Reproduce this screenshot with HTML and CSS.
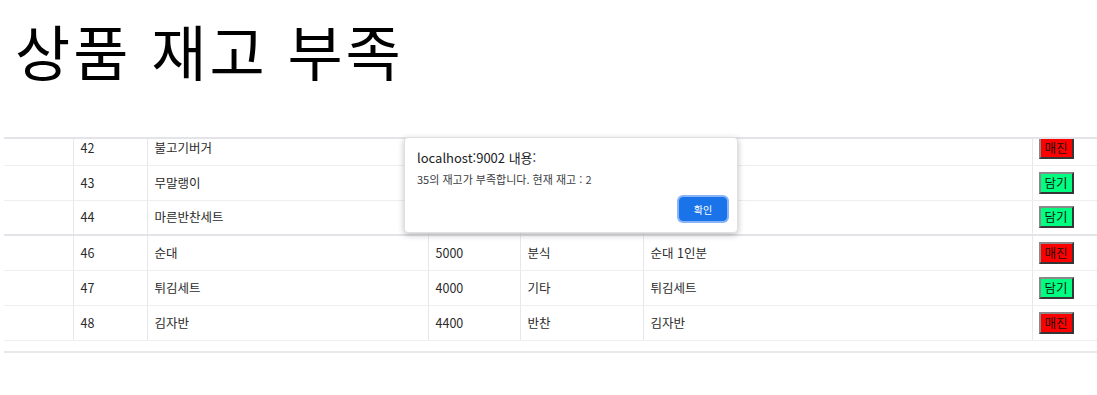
FILE: index.html
```html
<!DOCTYPE html>
<html lang="ko">
<head>
<meta charset="utf-8">
<title>상품 재고 부족</title>
<link rel="stylesheet" href="styles.css">
</head>
<body>
<h1 class="title">상품 재고 부족</h1>
<div class="table-wrap">
  <table class="stock">
    <colgroup>
      <col class="c1"><col class="c2"><col class="c3"><col class="c4"><col class="c5"><col class="c6"><col class="c7">
    </colgroup>
    <tbody>
      <tr><td></td><td>42</td><td>불고기버거</td><td></td><td></td><td></td><td><button class="btn sold">매진</button></td></tr>
      <tr><td></td><td>43</td><td>무말랭이</td><td></td><td></td><td></td><td><button class="btn add">담기</button></td></tr>
      <tr class="thick"><td></td><td>44</td><td>마른반찬세트</td><td></td><td></td><td></td><td><button class="btn add">담기</button></td></tr>
      <tr><td></td><td>46</td><td>순대</td><td>5000</td><td>분식</td><td>순대 1인분</td><td><button class="btn sold">매진</button></td></tr>
      <tr><td></td><td>47</td><td>튀김세트</td><td>4000</td><td>기타</td><td>튀김세트</td><td><button class="btn add">담기</button></td></tr>
      <tr><td></td><td>48</td><td>김자반</td><td>4400</td><td>반찬</td><td>김자반</td><td><button class="btn sold">매진</button></td></tr>
    </tbody>
  </table>
</div>
<div class="dialog">
  <div class="dlg-title">localhost:9002 내용:</div>
  <div class="dlg-msg">35의 재고가 부족합니다. 현재 재고 : 2</div>
  <div class="dlg-actions"><button class="dlg-ok">확인</button></div>
</div>
</body>
</html>
```
FILE: styles.css
```css
html, body {
  margin: 0;
  padding: 0;
  background: #fff;
  width: 1097px;
  height: 395px;
  overflow: hidden;
  font-family: "Noto Sans CJK KR", "Noto Sans", sans-serif;
  color: #212529;
}
.title {
  margin: 0;
  padding: 10px 0 0 15px;
  height: 137px;
  box-sizing: border-box;
  font-size: 60px;
  letter-spacing: 3px;
  font-weight: 400;
  line-height: 80px;
  color: #000;
}
.table-wrap {
  margin-left: 4px;
  height: 216px;
  box-sizing: border-box;
  border-top: 2px solid #e2e4e7;
  border-bottom: 2px solid #e8e9ec;
  overflow: hidden;
}
.stock {
  margin-top: -9px;
  width: 1120px;
  border-collapse: collapse;
  table-layout: fixed;
  font-size: 12.5px;
  color: #2b2b2b;
}
.c1 { width: 69px; }
.c2 { width: 74px; }
.c3 { width: 281px; }
.c4 { width: 92px; }
.c5 { width: 123px; }
.c6 { width: 389px; }
.c7 { width: 92px; }
.stock td {
  height: 33px;
  padding: 0 7px 1px;
  border-top: 1px solid #eceef0;
  border-bottom: 1px solid #eceef0;
  border-left: 1px solid #e6e8eb;
  vertical-align: middle;
  line-height: 18px;
  white-space: nowrap;
}
.stock td:first-child { border-left: none; }
.stock td:last-child { padding-left: 6px; }
.stock tr.thick td {
  height: 32px;
  border-bottom: 2px solid #e2e4e7;
}
.btn {
  font-family: "Noto Sans CJK KR", sans-serif;
  font-size: 12.5px;
  line-height: 18px;
  height: 22px;
  width: 35px;
  padding: 0;
  margin: 0;
  border: 2px outset #8a8a8a;
  color: #111;
  cursor: pointer;
  vertical-align: middle;
}
.sold { background: #ff0000; }
.add { background: #00ff80; }
.dialog {
  position: absolute;
  left: 404px;
  top: 137px;
  width: 334px;
  height: 96px;
  box-sizing: border-box;
  background: #fff;
  border: 1px solid #e0e0e0;
  border-radius: 4px;
  box-shadow: 0 2px 6px rgba(0,0,0,0.25);
  padding: 11px 11px 0 12px;
  display: flex;
  flex-direction: column;
}
.dlg-title {
  font-size: 13px;
  line-height: 18px;
  color: #202124;
}
.dlg-msg {
  margin-top: 4px;
  font-size: 11px;
  line-height: 16px;
  color: #3c4043;
}
.dlg-actions {
  margin-top: 10px;
  display: flex;
  justify-content: flex-end;
}
.dlg-ok {
  width: 48px;
  height: 24px;
  background: #1a73e8;
  color: #fff;
  font-family: "Noto Sans CJK KR", sans-serif;
  font-size: 10px;
  border: 1px solid #1a73e8;
  border-radius: 4px;
  box-shadow: 0 0 0 2px #8ab4f8;
  padding: 0;
  margin-right: -1px;
}
```
